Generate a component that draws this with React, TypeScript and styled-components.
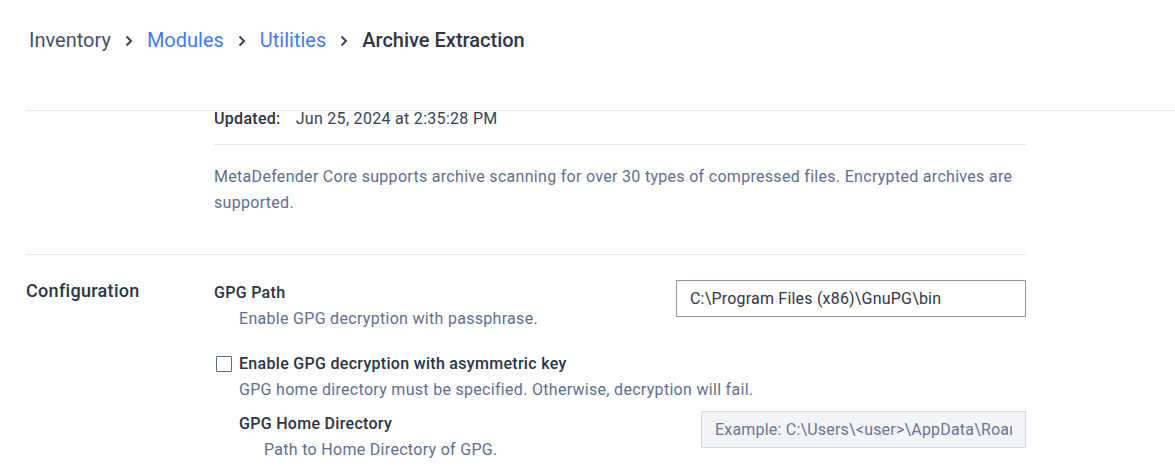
import React from "react";
import styled, { createGlobalStyle } from "styled-components";

const GlobalStyle = createGlobalStyle`
  html, body {
    margin: 0;
    padding: 0;
    background: #ffffff;
    font-family: Roboto, "Liberation Sans", Arial, sans-serif;
    color: #2b3445;
  }
`;

const Chevron = () => (
  <ChevronIcon viewBox="0 0 8 12" width="8" height="12">
    <path d="M1.5 1.5 L6 6 L1.5 10.5" fill="none" stroke="#3b4252" strokeWidth="2" />
  </ChevronIcon>
);

const App = () => {
  return (
    <>
      <GlobalStyle />
      <Page>
        <Header>
          <Crumbs>
            <Crumb>Inventory</Crumb>
            <Chevron />
            <CrumbLink href="#">Modules</CrumbLink>
            <Chevron />
            <CrumbLink href="#">Utilities</CrumbLink>
            <Chevron />
            <Current>Archive Extraction</Current>
          </Crumbs>
        </Header>

        <Body>
          <Section>
            <SectionTitle />
            <SectionContent>
              <UpdatedRow>
                <UpdatedLabel>Updated:</UpdatedLabel>
                <span>Jun 25, 2024 at 2:35:28 PM</span>
              </UpdatedRow>
              <Description>
                MetaDefender Core supports archive scanning for over 30 types
                of compressed files. Encrypted archives are supported.
              </Description>
            </SectionContent>
          </Section>

          <ConfigSection>
            <SectionTitle>Configuration</SectionTitle>
            <SectionContent>
              <Field>
                <FieldText>
                  <FieldLabel>GPG Path</FieldLabel>
                  <FieldHint>Enable GPG decryption with passphrase.</FieldHint>
                </FieldText>
                <TextInput
                  $width={350}
                  defaultValue="C:\Program Files (x86)\GnuPG\bin"
                />
              </Field>

              <CheckRow>
                <Box />
                <FieldLabel>Enable GPG decryption with asymmetric key</FieldLabel>
              </CheckRow>
              <Nested>
                <Warning>
                  GPG home directory must be specified. Otherwise, decryption
                  will fail.
                </Warning>
                <Field>
                  <FieldText>
                    <FieldLabel>GPG Home Directory</FieldLabel>
                    <FieldHint>Path to Home Directory of GPG.</FieldHint>
                  </FieldText>
                  <TextInput
                    $width={325}
                    disabled
                    placeholder="Example: C:\Users\<user>\AppData\Roaming\gnupg"
                  />
                </Field>
              </Nested>
            </SectionContent>
          </ConfigSection>
        </Body>
      </Page>
    </>
  );
};

export default App;

const Page = styled.div`
  width: 1175px;
  height: 472px;
  overflow: hidden;
`;

const Header = styled.header`
  height: 111px;
  margin-left: 26px;
  border-bottom: 1px solid #e6e7ee;
  box-sizing: border-box;
`;

const Crumbs = styled.nav`
  display: flex;
  align-items: center;
  gap: 14px;
  padding: 28px 0 0 3px;
  font-size: 20px;
  line-height: 24px;
`;

const Crumb = styled.span`
  color: #4a5061;
`;

const CrumbLink = styled.a`
  color: #3d7bff;
  text-decoration: none;
`;

const Current = styled.span`
  color: #2f3648;
  font-weight: 500;
`;

const ChevronIcon = styled.svg`
  display: block;
  margin-top: 2px;
`;

const Body = styled.div`
  margin-left: 26px;
  width: 1000px;
  letter-spacing: 0.3px;
`;

const Section = styled.section`
  display: grid;
  grid-template-columns: 188px 1fr;
  border-bottom: 1px solid #e6e7ee;
`;

const ConfigSection = styled(Section)`
  border-bottom: none;
  padding-top: 24px;
`;

const SectionTitle = styled.h2`
  margin: 0;
  font-size: 18px;
  line-height: 24px;
  font-weight: 500;
  color: #2b3445;
`;

const SectionContent = styled.div`
  display: flex;
  flex-direction: column;
`;

const UpdatedRow = styled.div`
  display: flex;
  gap: 15px;
  font-size: 16px;
  line-height: 16px;
  padding: 0 0 17px;
  color: #3a4254;
  border-bottom: 1px solid #e6e7ee;
`;

const UpdatedLabel = styled.span`
  font-weight: 500;
  color: #2b3445;
`;

const Description = styled.p`
  margin: 0;
  padding: 19px 0 38px;
  font-size: 16px;
  line-height: 26px;
  color: #5f6e8f;
`;

const Field = styled.div`
  display: flex;
  justify-content: space-between;
  align-items: flex-start;
`;

const FieldText = styled.div`
  display: flex;
  flex-direction: column;
  padding-top: 2px;
`;

const FieldLabel = styled.span`
  font-size: 16px;
  line-height: 24px;
  font-weight: 500;
  color: #2b3445;
`;

const FieldHint = styled.span`
  padding: 1px 0 0 25px;
  font-size: 16px;
  line-height: 26px;
  color: #5f6e8f;
`;

const TextInput = styled.input<{ $width: number }>`
  width: ${(p) => p.$width}px;
  height: 37px;
  margin-top: 1px;
  box-sizing: border-box;
  padding: 0 13px;
  border: 1px solid #8a94b0;
  border-radius: 0;
  font-family: inherit;
  font-size: 16px;
  letter-spacing: 0.2px;
  color: #2f3748;
  background: #ffffff;
  outline: none;

  &:disabled {
    background: #f3f4f8;
    border-color: #d5d9e5;
  }

  &::placeholder {
    color: #6b7592;
  }
`;

const CheckRow = styled.label`
  display: flex;
  align-items: center;
  gap: 7px;
  margin-top: 20px;
  padding-left: 2px;
`;

const Box = styled.span`
  width: 16px;
  height: 16px;
  box-sizing: border-box;
  border: 1px solid #5d6b8d;
  border-radius: 1px;
  background: #ffffff;
`;

const Nested = styled.div`
  display: flex;
  flex-direction: column;
  padding-left: 25px;
`;

const Warning = styled.p`
  margin: 1px 0 7px;
  font-size: 16px;
  line-height: 26px;
  color: #5f6e8f;
`;
